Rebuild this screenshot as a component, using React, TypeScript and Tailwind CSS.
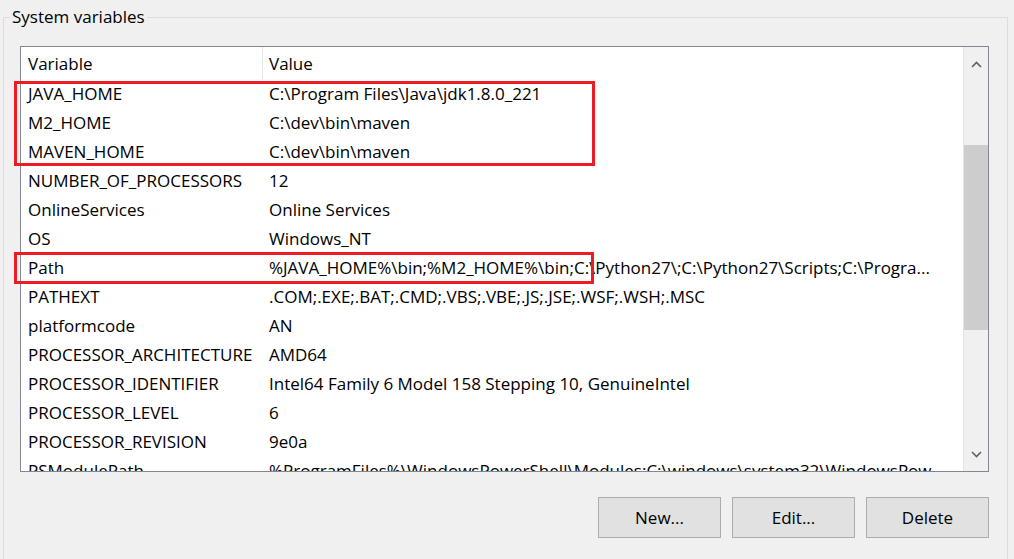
import React from 'react';

const rows: [string, string][] = [
  ['JAVA_HOME', 'C:\\Program Files\\Java\\jdk1.8.0_221'],
  ['M2_HOME', 'C:\\dev\\bin\\maven'],
  ['MAVEN_HOME', 'C:\\dev\\bin\\maven'],
  ['NUMBER_OF_PROCESSORS', '12'],
  ['OnlineServices', 'Online Services'],
  ['OS', 'Windows_NT'],
  ['Path', '%JAVA_HOME%\\bin;%M2_HOME%\\bin;C:\\Python27\\;C:\\Python27\\Scripts;C:\\Progra...'],
  ['PATHEXT', '.COM;.EXE;.BAT;.CMD;.VBS;.VBE;.JS;.JSE;.WSF;.WSH;.MSC'],
  ['platformcode', 'AN'],
  ['PROCESSOR_ARCHITECTURE', 'AMD64'],
  ['PROCESSOR_IDENTIFIER', 'Intel64 Family 6 Model 158 Stepping 10, GenuineIntel'],
  ['PROCESSOR_LEVEL', '6'],
  ['PROCESSOR_REVISION', '9e0a'],
  ['PSModulePath', '%ProgramFiles%\\WindowsPowerShell\\Modules;C:\\windows\\system32\\WindowsPow...'],
];

function Chevron({ up }: { up?: boolean }) {
  return (
    <svg width="11" height="7" viewBox="0 0 11 7" className="block">
      <path
        d={up ? 'M1 6 L5.5 1.5 L10 6' : 'M1 1 L5.5 5.5 L10 1'}
        fill="none"
        stroke="#606060"
        strokeWidth="1.6"
      />
    </svg>
  );
}

function WinButton({ label }: { label: string }) {
  return (
    <button className="w-[123px] h-[41px] border border-[#adadad] bg-[#e1e1e1] text-[17px] text-black">
      {label}
    </button>
  );
}

export default function App() {
  return (
    <div
      className="relative w-[1014px] h-[559px] overflow-hidden bg-[#f0f0f0] text-black"
      style={{ fontFamily: '"Open Sans", "Noto Sans", sans-serif' }}
    >
      <fieldset className="ml-[3px] mt-[6px] w-[1005px] h-[600px] border border-[#dcdcdc] pl-[16px] pr-[18px]">
        <legend className="-ml-[10px] px-[2px] text-[17px] leading-[22px] text-black">System variables</legend>

        {/* list view */}
        <div className="mt-[18px] w-[969px] h-[426px] border border-[#828790] bg-white flex">
          <div className="flex-1 overflow-hidden text-[17px] leading-[29px]">
            <div className="flex h-[32px] items-center">
              <div className="w-[242px] pl-[7px] h-full flex items-center border-r border-[#e5e5e5]">Variable</div>
              <div className="pl-[6px]">Value</div>
            </div>
            {rows.map(([name, value]) => (
              <div key={name} className="flex h-[29px] items-center whitespace-nowrap">
                <div className="w-[242px] pl-[7px]">{name}</div>
                <div className="pl-[6px]">{value}</div>
              </div>
            ))}
          </div>
          {/* scrollbar */}
          <div className="w-[25px] h-full bg-[#f0f0f0] border-l border-[#e5e5e5] flex flex-col">
            <div className="h-[34px] flex items-center justify-center"><Chevron up /></div>
            <div className="flex-1 flex flex-col">
              <div className="h-[64px]" />
              <div className="h-[185px] bg-[#cdcdcd]" />
            </div>
            <div className="h-[34px] flex items-center justify-center"><Chevron /></div>
          </div>
        </div>

        <div className="mt-[25px] w-[969px] flex justify-end gap-[11px]">
          <WinButton label="New..." />
          <WinButton label="Edit..." />
          <WinButton label="Delete" />
        </div>
      </fieldset>

      {/* annotation boxes */}
      <div className="absolute left-[14px] top-[81px] w-[581px] h-[85px] border-[3px] border-[#ed1c24]" />
      <div className="absolute left-[14px] top-[252px] w-[580px] h-[32px] border-[3px] border-[#ed1c24]" />
    </div>
  );
}
